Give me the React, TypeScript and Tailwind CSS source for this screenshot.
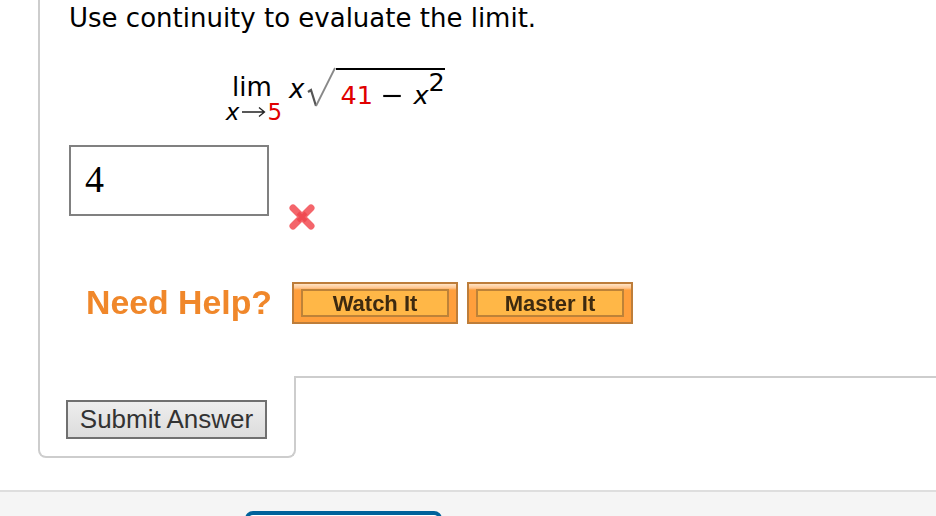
import { useState } from "react";

const HELP_LINKS = ["Watch It", "Master It"];

function HelpButton({ label }: { label: string }) {
  return (
    <button className="h-[42px] w-[166px] border-2 border-[#bd7d3a] bg-[#ff9f3c] px-[7px] pb-[5px] pt-[5px] [background-image:linear-gradient(#ffe3c4_0,#ffc58e_4px,#ff9f3c_6px)]">
      <span className="flex h-[28px] items-center justify-center border-2 border-[#bd8238] bg-[#ffb747] font-['Liberation_Sans',sans-serif] text-[22px] font-bold text-[#3d2a10] blur-[0.6px]">
        {label}
      </span>
    </button>
  );
}

function Radical() {
  return (
    <svg width="30" height="48" viewBox="0 0 30 48" className="shrink-0" aria-hidden="true">
      <path d="M1 26 L4 24 L9 40" fill="none" stroke="#555" strokeWidth="2.2" />
      <path d="M9 40 L28 2" fill="none" stroke="#888" strokeWidth="1.8" />
    </svg>
  );
}

function Limit() {
  return (
    <div className="ml-[152px] mt-[20px] flex h-[64px] items-start font-['DejaVu_Sans',sans-serif] text-black">
      <div className="flex w-[62px] flex-col items-center pt-[19px]">
        <span className="text-[26px] leading-[26px]">lim</span>
        <span className="ml-[4px] mt-[1px] flex items-center text-[23px] leading-[22px]">
          <i>x</i>
          <svg width="26" height="12" viewBox="0 0 26 12" className="mx-[1px]" aria-hidden="true">
            <path d="M2 6 H24 M19 1.5 L24.5 6 L19 10.5" fill="none" stroke="#222" strokeWidth="1.3" />
          </svg>
          <span className="text-[#e00000]">5</span>
        </span>
      </div>
      <i className="ml-[6px] pt-[21px] text-[26px] leading-[26px]">x</i>
      <div className="ml-[3px] mt-[11px] flex">
        <Radical />
        <div className="-ml-[1px] mt-[2px] flex h-[38px] w-[109px] items-start border-t-2 border-black pl-[4px] pt-[6px] text-[25.6px] leading-[38px]">
          <span className="text-[#e00000]">41</span>
          <span className="ml-[8px] scale-x-110">−</span>
          <i className="ml-[11px]">x</i>
          <span className="-mt-[13px]">2</span>
        </div>
      </div>
    </div>
  );
}

export default function App() {
  const [answer] = useState("4");

  return (
    <div className="flex h-[516px] w-[936px] flex-col overflow-hidden bg-white">
      <div className="ml-[38px] h-[376px] border-l-2 border-[#cdcdcd] pl-[29px]">
        <p className="pt-[2px] font-['DejaVu_Sans',sans-serif] text-[26px] leading-[33px] text-black">
          Use continuity to evaluate the limit.
        </p>
        <Limit />
        <div className="mt-[26px] flex items-start">
          <div className="flex h-[71px] w-[200px] items-center border-2 border-[#808080] pb-[3px] pl-[14px] font-['Liberation_Serif',serif] text-[38px] text-black">
            {answer}
          </div>
          <svg width="28" height="28" viewBox="0 0 28 28" className="ml-[19px] mt-[58px]" aria-hidden="true">
            <path d="M5 5 L23 23 M23 5 L5 23" fill="none" stroke="#f4656b" strokeWidth="7" strokeLinecap="round" />
            <path d="M10 10 L18 18 M18 10 L10 18" fill="none" stroke="#f04a52" strokeWidth="4" />
          </svg>
        </div>
        <div className="ml-[17px] mt-[48px] flex items-center">
          <span className="-mt-[2px] w-[206px] whitespace-nowrap font-['Liberation_Sans',sans-serif] text-[33.8px] font-bold text-[#f0872a] blur-[0.6px]">
            Need Help?
          </span>
          <div className="flex gap-[9px]">
            {HELP_LINKS.map((link) => (
              <HelpButton key={link} label={link} />
            ))}
          </div>
        </div>
      </div>

      <div className="flex items-start">
        <div className="ml-[38px] h-[82px] w-[258px] rounded-b-[8px] border-x-2 border-b-2 border-[#cdcdcd] pl-[26px] pt-[24px]">
          <button className="h-[39px] w-[201px] border-2 border-[#707070] bg-gradient-to-b from-[#eeeeee] to-[#dcdcdc] pb-[2px] font-['Liberation_Sans',sans-serif] text-[26px] leading-none text-[#333]">
            Submit Answer
          </button>
        </div>
        <div className="h-[2px] flex-1 bg-[#cdcdcd]" />
      </div>

      <div className="mt-[32px] h-[26px] shrink-0 border-t-2 border-[#dedede] bg-[#f5f5f5] pl-[245px] pt-[19px]">
        <div className="h-[12px] w-[197px] rounded-t-[8px] border-4 border-[#00629b] bg-white" />
      </div>
    </div>
  );
}
